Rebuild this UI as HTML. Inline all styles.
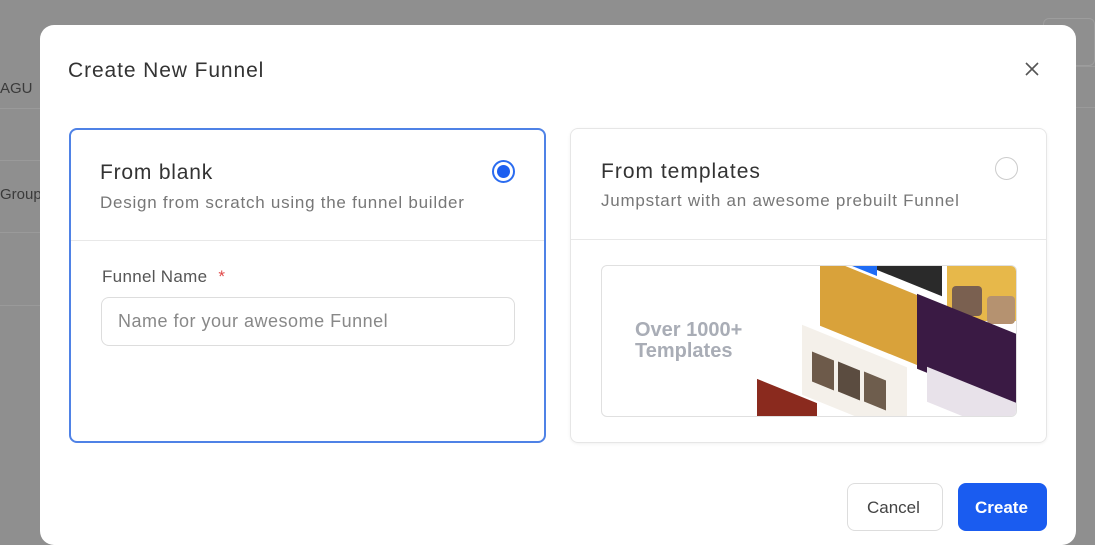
<!DOCTYPE html>
<html><head><style>
*{margin:0;padding:0;box-sizing:border-box}
body{width:1095px;height:522px;overflow:hidden;background:#8f8f8f;font-family:"Liberation Sans",Arial,sans-serif;position:relative}
.a{position:absolute;white-space:nowrap}
.ln{position:absolute;left:0;width:40px;height:1px;background:#9a9a9a}
.sub{font-size:17px;letter-spacing:0.75px;color:#777}
.ttl{font-size:21px;letter-spacing:0.8px;color:#333}
</style></head><body>
<div class="a" style="left:0;top:80px;font-size:15px;color:#3a3a3a">AGU</div>
<div class="a" style="left:0;top:186px;font-size:15px;color:#3a3a3a">Group</div>
<div class="ln" style="top:108px"></div><div class="ln" style="top:160px"></div><div class="ln" style="top:232px"></div><div class="ln" style="top:305px"></div>
<div class="a" style="left:1043px;top:18px;width:52px;height:48px;border:1px solid #9d9d9d;border-radius:6px"></div>
<div class="a" style="left:1076px;top:66px;width:19px;height:1px;background:#9a9a9a"></div>
<div class="a" style="left:1076px;top:107px;width:19px;height:1px;background:#9a9a9a"></div>

<div class="a" style="left:40px;top:25px;width:1036px;height:520px;background:#fff;border-radius:14px">
  <div class="a ttl" style="left:28px;top:34px;letter-spacing:0.9px">Create New Funnel</div>
  <svg class="a" style="left:984px;top:36px" width="16" height="16" viewBox="0 0 16 16"><path d="M2 2L14 14M14 2L2 14" stroke="#555" stroke-width="1.6"/></svg>

  <div class="a" style="left:29px;top:103px;width:477px;height:315px;border:2px solid #4f82e6;border-radius:8px">
    <div class="a ttl" style="left:29px;top:31px">From blank</div>
    <div class="a sub" style="left:29px;top:63px">Design from scratch using the funnel builder</div>
    <div class="a" style="left:421px;top:30px;width:23px;height:23px;border:2px solid #2b6cf0;border-radius:50%"></div>
    <div class="a" style="left:426px;top:35px;width:13px;height:13px;background:#1d5ff0;border-radius:50%"></div>
    <div class="a" style="left:0;top:110px;width:473px;height:1px;background:#e8e8e8"></div>
    <div class="a" style="left:31px;top:137px;font-size:17px;letter-spacing:0.3px;color:#555">Funnel Name <span style="color:#e04848;margin-left:6px">*</span></div>
    <div class="a" style="left:30px;top:167px;width:414px;height:49px;border:1px solid #ddd;border-radius:8px"></div>
    <div class="a" style="left:47px;top:181px;font-size:18px;letter-spacing:0.5px;color:#888">Name for your awesome Funnel</div>
  </div>

  <div class="a" style="left:530px;top:103px;width:477px;height:315px;border:1px solid #e6e6e6;border-radius:8px;box-shadow:0 1px 3px rgba(0,0,0,.06)">
    <div class="a ttl" style="left:30px;top:31px;letter-spacing:1px">From templates</div>
    <div class="a sub" style="left:30px;top:62px">Jumpstart with an awesome prebuilt Funnel</div>
    <div class="a" style="left:424px;top:28px;width:23px;height:23px;border:1px solid #ccc;border-radius:50%"></div>
    <div class="a" style="left:0;top:110px;width:475px;height:1px;background:#e8e8e8"></div>
    <div class="a" style="left:30px;top:136px;width:416px;height:152px;border:1px solid #e0e0e0;border-radius:6px;overflow:hidden">
      <div class="a" style="left:33px;top:54px;font-size:20px;font-weight:bold;color:#a9adb6;line-height:21px">Over 1000+<br>Templates</div>
      <div class="a" style="left:240px;top:-30px;width:100px;height:40px;background:#2a2a2a;transform:skewY(22deg)"></div>
      <div class="a" style="left:245px;top:-10px;width:30px;height:14px;background:#1f6cf5;transform:skewY(22deg)"></div>
      <div class="a" style="left:218px;top:10px;width:100px;height:70px;background:#d9a23a;transform:skewY(22deg)"></div>
      <div class="a" style="left:200px;top:80px;width:105px;height:70px;background:#f4f0ea;transform:skewY(22deg)"></div>
      <div class="a" style="left:210px;top:90px;width:22px;height:30px;background:#6d5a4a;transform:skewY(22deg)"></div>
      <div class="a" style="left:236px;top:100px;width:22px;height:30px;background:#5b4c40;transform:skewY(22deg)"></div>
      <div class="a" style="left:262px;top:110px;width:22px;height:30px;background:#6e5d4d;transform:skewY(22deg)"></div>
      <div class="a" style="left:155px;top:125px;width:60px;height:40px;background:#8a2a1e;transform:skewY(22deg)"></div>
      <div class="a" style="left:345px;top:-5px;width:70px;height:60px;background:#e7b84a"></div>
      <div class="a" style="left:350px;top:20px;width:30px;height:30px;background:#7a6050;border-radius:4px"></div>
      <div class="a" style="left:385px;top:30px;width:28px;height:28px;background:#b59270;border-radius:4px"></div>
      <div class="a" style="left:315px;top:50px;width:110px;height:75px;background:#3a1a44;transform:skewY(22deg)"></div>
      <div class="a" style="left:325px;top:120px;width:95px;height:35px;background:#e8e2ea;transform:skewY(22deg)"></div>
    </div>
  </div>

  <div class="a" style="left:807px;top:458px;width:96px;height:48px;border:1px solid #ddd;border-radius:8px"></div>
  <div class="a" style="left:827px;top:473px;font-size:17px;color:#444">Cancel</div>
  <div class="a" style="left:918px;top:458px;width:89px;height:48px;background:#1a5cf0;border-radius:8px"></div>
  <div class="a" style="left:935px;top:473px;font-size:17px;font-weight:bold;color:#fff">Create</div>
</div>
</body></html>
